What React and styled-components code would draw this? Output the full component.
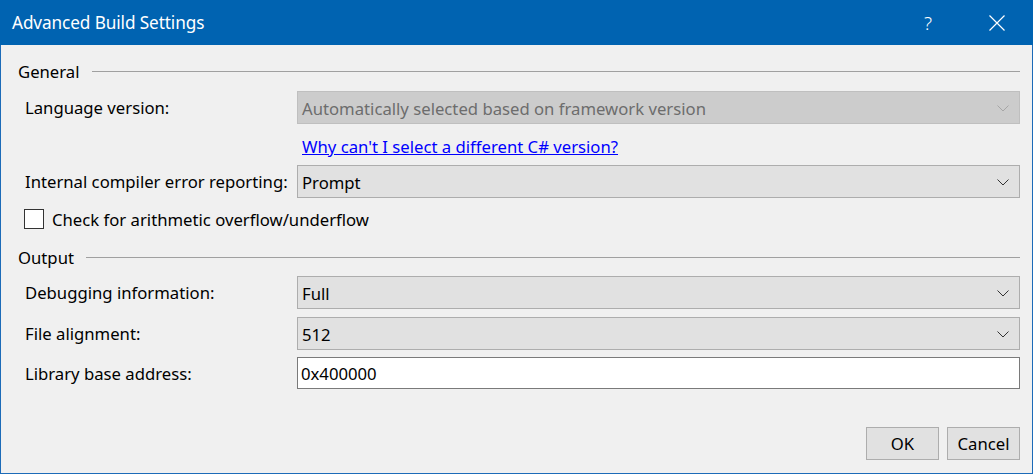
import React from 'react'
import styled, { createGlobalStyle } from 'styled-components'

const Global = createGlobalStyle`
  html, body { margin: 0; padding: 0; background: #f0f0f0; }
  body { font-family: "Segoe UI", "Noto Sans", "Open Sans", sans-serif; }
`;

const Window = styled.div`
  width: 1033px;
  height: 474px;
  box-sizing: border-box;
  border: 1px solid #1c6bb8;
  border-top: none;
  background: #f0f0f0;
  display: flex;
  flex-direction: column;
`;

const TitleBar = styled.div`
  height: 45px;
  margin: 0 -1px;
  background: #0063b1;
  color: #fff;
  display: flex;
  align-items: center;
  padding-left: 12px;
  padding-right: 1px;
`;

const Title = styled.div`
  flex: 1;
  font-size: 17.2px;
  letter-spacing: -0.1px;
`;

const TitleButton = styled.div`
  width: ${({ $w }) => $w}px;
  height: 45px;
  display: flex;
  align-items: center;
  justify-content: center;
  font-size: 19px;
  font-weight: 300;
`;

const Body = styled.div`
  flex: 1;
  display: flex;
  flex-direction: column;
  padding: 0 12px 0 17px;
  font-size: 16.7px;
  color: #000;
`;

const GroupHeader = styled.div`
  display: flex;
  align-items: center;
  height: 24px;
  margin-top: ${({ $top }) => $top}px;
  span { margin-right: 12px; }
  &::after {
    content: '';
    flex: 1;
    height: 1px;
    background: #a0a0a0;
  }
`;

const Row = styled.div`
  display: grid;
  grid-template-columns: 272px 1fr;
  align-items: center;
  padding-left: 7px;
  margin-top: ${({ $top }) => $top}px;
`;

const Combo = styled.div`
  height: 33px;
  box-sizing: border-box;
  border: 1px solid ${({ $disabled }) => ($disabled ? '#bfbfbf' : '#adadad')};
  background: ${({ $disabled }) => ($disabled ? '#cccccc' : '#e1e1e1')};
  color: ${({ $disabled }) => ($disabled ? '#6d6d6d' : '#000')};
  display: flex;
  align-items: center;
  padding: 1px 10px 0 4px;
  span { flex: 1; white-space: nowrap; }
`;

const TextInput = styled.div`
  height: 32px;
  box-sizing: border-box;
  border: 1px solid #7a7a7a;
  background: #fff;
  display: flex;
  align-items: center;
  padding: 1px 0 0 3px;
`;

const LinkRow = styled.div`
  padding-left: 284px;
  margin-top: 12px;
  height: 20px;
  display: flex;
  align-items: center;
`;

const Link = styled.a`
  color: #0000ff;
  text-decoration: underline;
  cursor: pointer;
`;

const CheckRow = styled.label`
  display: flex;
  align-items: center;
  margin-top: 11px;
  padding-left: 6px;
  height: 20px;
`;

const Box = styled.span`
  width: 20px;
  height: 20px;
  box-sizing: border-box;
  border: 1px solid #333;
  background: #fff;
  margin-right: 8px;
`;

const Footer = styled.div`
  margin-top: auto;
  margin-bottom: 13px;
  display: flex;
  justify-content: flex-end;
  gap: 8px;
`;

const Button = styled.div`
  width: 73px;
  height: 33px;
  box-sizing: border-box;
  border: 1px solid #adadad;
  background: #e1e1e1;
  display: flex;
  align-items: center;
  justify-content: center;
`;

const Chevron = ({ color }) => (
  <svg width="12" height="7" viewBox="0 0 12 7">
    <path d="M0.5 0.5 L6 6 L11.5 0.5" fill="none" stroke={color} strokeWidth="1" />
  </svg>
);

const CloseIcon = () => (
  <svg width="16" height="16" viewBox="0 0 16 16">
    <path d="M0.5 0.5 L15.5 15.5 M15.5 0.5 L0.5 15.5" stroke="#fff" strokeWidth="1.2" />
  </svg>
);

const App = () => {
  return (
    <>
      <Global />
      <Window>
        <TitleBar>
          <Title>Advanced Build Settings</Title>
          <TitleButton $w={68}>?</TitleButton>
          <TitleButton $w={70}><CloseIcon /></TitleButton>
        </TitleBar>
        <Body>
          <GroupHeader $top={14}><span>General</span></GroupHeader>
          <Row $top={8}>
            <div>Language version:</div>
            <Combo $disabled>
              <span>Automatically selected based on framework version</span>
              <Chevron color="#a6a6a6" />
            </Combo>
          </Row>
          <LinkRow>
            <Link>Why can't I select a different C# version?</Link>
          </LinkRow>
          <Row $top={9}>
            <div>Internal compiler error reporting:</div>
            <Combo>
              <span>Prompt</span>
              <Chevron color="#333" />
            </Combo>
          </Row>
          <CheckRow>
            <Box />
            Check for arithmetic overflow/underflow
          </CheckRow>
          <GroupHeader $top={16}><span>Output</span></GroupHeader>
          <Row $top={7}>
            <div>Debugging information:</div>
            <Combo>
              <span>Full</span>
              <Chevron color="#333" />
            </Combo>
          </Row>
          <Row $top={8}>
            <div>File alignment:</div>
            <Combo>
              <span>512</span>
              <Chevron color="#333" />
            </Combo>
          </Row>
          <Row $top={7}>
            <div>Library base address:</div>
            <TextInput>0x400000</TextInput>
          </Row>
          <Footer>
            <Button>OK</Button>
            <Button>Cancel</Button>
          </Footer>
        </Body>
      </Window>
    </>
  )
}

export default App
